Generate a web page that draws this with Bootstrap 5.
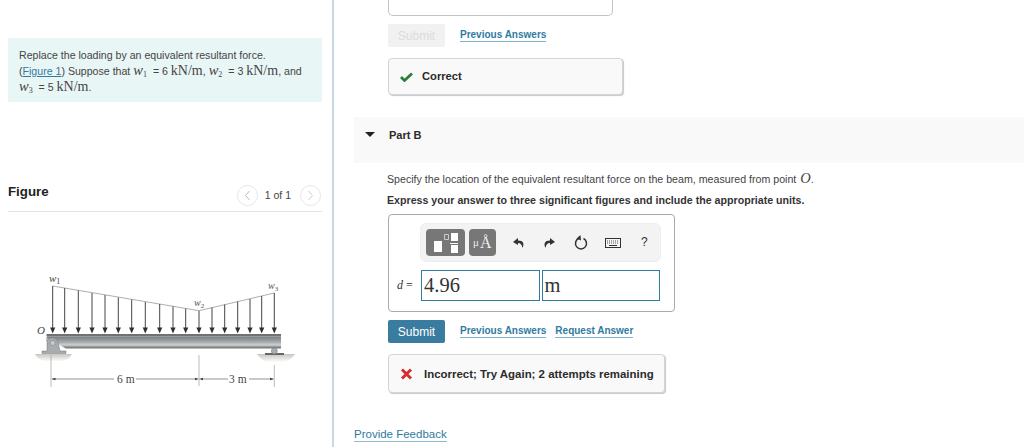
<!DOCTYPE html>
<html lang="en">
<head>
<meta charset="utf-8">
<title>Part B</title>
<link href="https://cdn.jsdelivr.net/npm/bootstrap@5.3.0/dist/css/bootstrap.min.css" rel="stylesheet">
<style>
html,body{height:447px;overflow:hidden;background:#fff}
body{font-family:"Liberation Sans",Arial,sans-serif;font-size:11px;color:#333;line-height:15px}
.shell{height:447px}
.leftpane{width:334px;flex:none;height:447px;border-right:2px solid #c6d7e6;padding:38px 10px 0 8px;overflow:hidden}
.intro{background:#e9f6f6;height:64px;padding:10px 11px;width:314px;font-size:10.6px;line-height:15px;color:#444;white-space:nowrap}
.intro a{color:#2f7ba1;text-decoration:underline}
.mth{font-family:"Liberation Serif",serif;font-size:14px}
.mi{font-family:"Liberation Serif",serif;font-style:italic;font-size:14.5px}
.mi sub{font-size:8px;font-style:normal;bottom:-.2em;margin-right:3px;line-height:0}
.nosub{margin-left:1px}
.fighead{margin-top:80px;width:314px;height:30px;border-bottom:1px solid #dfe3e6}
.figtitle{font-size:13.3px;font-weight:700;color:#222;padding-top:2px}
.pager{font-size:10.5px;color:#444;gap:7px;padding-top:3px;margin-right:1px}
.pgbtn{width:21px;height:21px;border-radius:50%;border:1px solid #e6e6e6;color:#bbb;display:flex;align-items:center;justify-content:center}
.pgtext{padding-top:3px;margin-right:2px}
.figbox{margin-top:53px;margin-left:-8px;display:block}
.rightpane{flex:1;min-width:0;margin-left:20px}
.inner{padding-left:34px;width:320px}
.prevbox{height:16px;width:225px;border:1px solid #c4c4c4;border-top:0;border-radius:0 0 5px 5px}
.sbm{width:57px;height:23px;border-radius:2px;font-size:12px;line-height:24px;text-align:center}
.sbm-off{background:#f1f1f1;color:#dcdcdc}
.sbm-on{background:#397ca0;color:#fff}
.actrow{gap:9px;align-items:flex-start}
.lnk{font-size:10px;font-weight:700;color:#2f7ba1;text-decoration:none;border-bottom:1px solid #7fb3cc;line-height:12px;margin-top:5px;margin-left:6px}
.lnk+.lnk{margin-left:0}
.fdbk{background:#f9f9f9;border:1px solid #d4d4d4;border-radius:4px;box-shadow:1px 1px 1px #c8c8c8;display:flex;align-items:center;font-weight:700;font-size:11.45px;color:#2b2b2b}
.fd1{width:235px;height:37px;margin-top:11px;padding-left:11px;gap:9px;font-size:11.2px}
.fd2{width:277px;height:39px;margin-top:11px;padding:1px 0 0 11px;gap:11px}
.partbar{background:#f9f9f9;height:46px;margin-top:22px;padding:11px 0 0 11px;gap:14px;font-weight:700;font-size:11px;color:#2b2b2b}
.tri{width:0;height:0;border-left:5px solid transparent;border-right:5px solid transparent;border-top:5px solid #222}
.ques{padding:8px 0 0 33px;height:51px;font-size:10.65px;color:#444}
.ques p{margin:0 0 6px}
.ques b{color:#333}
.ansbox{margin-left:34px;width:287px;height:98px;border:1px solid #aaa;border-radius:4px;padding:8px 0 0 8px}
.tbar{margin-left:23px;width:241px;height:39px;background:#f3f3f3;border-radius:6px;border:1px solid #eee;align-items:center;padding-left:5px}
.tmpl{height:27px;background:#777;border-radius:4px;display:flex;align-items:center;justify-content:center}
.t1{width:40px}
.t2{width:27px;margin-left:4px;color:#eee;font-family:"Liberation Serif",serif;font-size:11px;gap:1px}
.t2 span{font-size:16px}
.ticons{margin-left:7px;color:#333}
.ticons>span{width:31.5px;display:flex;justify-content:center;font-size:12px}
.ansrow{margin-top:8px;align-items:center}
.dlab{width:24px;font-family:"Liberation Serif",serif;font-size:12px;color:#333}
.fld{height:31px;width:118.5px;border:1px solid #2f7ba1;background:#fff;font-family:"Liberation Serif",serif;font-size:20.5px;line-height:29px;padding-left:2px;color:#333}
.fld+.fld{margin-left:2px}
.feedlink{display:inline-block;color:#2f7ba1;font-size:11.5px;margin-top:35px;text-decoration:none;border-bottom:1px solid #8dbbd3;line-height:13px}
.sbmrow{margin-top:8px}
.stems path{stroke:#444;stroke-width:1;fill:none}
.heads{fill:#2f2f2f}
</style>
</head>
<body>
<div class="d-flex shell">
  <div class="leftpane">
    <div class="intro">Replace the loading by an equivalent resultant force.<br>(<a href="#">Figure 1</a>) Suppose that <span class="mi">w<sub>1</sub></span> = 6 <span class="mth">kN/m</span>, <span class="mi">w<sub>2</sub></span> = 3 <span class="mth">kN/m</span>, and<br><span class="mi">w<sub>3</sub></span> = 5 <span class="mth">kN/m</span>.</div>
    <div class="fighead d-flex justify-content-between">
      <div class="figtitle">Figure</div>
      <div class="pager d-flex align-items-start"><span class="pgbtn"><svg width="7" height="11" viewBox="0 0 7 11"><path d="M5.500 1 1.500 5.500 5.500 10" fill="none" stroke="#bbb"/></svg></span><span class="pgtext">1 of 1</span><span class="pgbtn"><svg width="7" height="11" viewBox="0 0 7 11"><path d="M1.500 1 5.500 5.500 1.500 10" fill="none" stroke="#ccc"/></svg></span></div>
    </div>
    <svg class="figbox" width="320" height="125" viewBox="0 262 320 125" role="img" aria-label="Beam with distributed load">
      <defs>
        <linearGradient id="bm" x1="0" y1="0" x2="0" y2="1"><stop offset="0" stop-color="#7f8486"/><stop offset=".14" stop-color="#a9adae"/><stop offset=".22" stop-color="#7d8386"/><stop offset=".55" stop-color="#a5a9ab"/><stop offset=".76" stop-color="#cfd2d2"/><stop offset=".92" stop-color="#7d8285"/><stop offset="1" stop-color="#777"/></linearGradient>
        <linearGradient id="gr" x1="0" y1="0" x2="0" y2="1"><stop offset="0" stop-color="#c5c7bf"/><stop offset="1" stop-color="#fff"/></linearGradient>
        <path id="hd" d="M-2.600 324.500H2.600L0 330.500Z"/>
      </defs>
      <path d="M52.700 283 199 307.700 274.300 290" fill="none" stroke="#999" stroke-width=".8"/>
      <g class="stems">
        <path d="M52.700 283V326M64.700 285V326M78.300 287.500V326M92 290V326M105 292V326M118.300 294.500V326M131.700 296.500V326M145.300 299V326M159.700 301V326M173 303.500V326M185.700 305.500V326M199 308V326M212 304.500V326M224.700 301.500V326M237.700 298.500V326M250 296V326M261.700 293V326M274.300 290V326"/>
      </g>
      <g class="heads">
        <use href="#hd" x="52.700"/><use href="#hd" x="64.700"/><use href="#hd" x="78.300"/><use href="#hd" x="92"/><use href="#hd" x="105"/><use href="#hd" x="118.300"/><use href="#hd" x="131.700"/><use href="#hd" x="145.300"/><use href="#hd" x="159.700"/><use href="#hd" x="173"/><use href="#hd" x="185.700"/><use href="#hd" x="199"/><use href="#hd" x="212"/><use href="#hd" x="224.700"/><use href="#hd" x="237.700"/><use href="#hd" x="250"/><use href="#hd" x="261.700"/><use href="#hd" x="274.300"/>
      </g>
      <path d="M46.700 331H281V345.500H66L46.700 335Z" fill="url(#bm)"/>
      <path d="M46.700 331H281V333H46.700Z" fill="#6d7275"/>
      <path d="M35 351H72C68 358 62 359 53 358.500 44 359 38 357 35 351Z" fill="url(#gr)"/>
      <path d="M257 351H295C291 358 284 360 275 359 266 360 261 357 257 351Z" fill="url(#gr)"/>
      <path d="M47 335V348H42V350.500H66V348H60L58 339C56 334 50 333 47 338Z" fill="#a8acae" stroke="#777" stroke-width=".5"/>
      <circle cx="52.700" cy="340" r="2.500" fill="#c9cccc" stroke="#777" stroke-width=".5"/>
      <path d="M265 350H284V352H265Z" fill="#666"/>
      <circle cx="274.300" cy="348" r="3" fill="#a9adad" stroke="#777" stroke-width=".5"/>
      <path d="M51 352V384M199 352V383M274.300 362V384" stroke="#aaa" stroke-width=".8" fill="none"/>
      <path d="M52 376H114M136 376H197M201 376H228M249 376H273" stroke="#666" stroke-width=".7" fill="none"/>
      <path d="M51.500 376l4-1.300v2.600ZM199 376l-4-1.300v2.600ZM199 376l4-1.300v2.600ZM274 376l-4-1.300v2.600Z" fill="#444"/>
      <g font-family="Liberation Serif,serif" fill="#444">
        <text x="117" y="379.500" font-size="11.500">6 m</text>
        <text x="229" y="379.500" font-size="11.500">3 m</text>
        <text x="49" y="279" font-size="11" font-style="italic">w<tspan font-size="8" dy="2" font-style="normal">1</tspan></text>
        <text x="194" y="303" font-size="10" font-style="italic" fill="#555">w<tspan font-size="7" dy="2" font-style="normal">2</tspan></text>
        <text x="268" y="286" font-size="10" font-style="italic" fill="#555">w<tspan font-size="7" dy="2" font-style="normal">3</tspan></text>
        <text x="37" y="331" font-size="11" font-style="italic">O</text>
      </g>
    </svg>
  </div>
  <div class="rightpane">
    <div class="inner">
      <div class="prevbox"></div>
      <div class="d-flex actrow mt-2"><div class="sbm sbm-off">Submit</div><a class="lnk" href="#">Previous Answers</a></div>
      <div class="fdbk fd1"><svg width="13" height="10" viewBox="0 0 13 10"><path d="M1 5 4.500 8.500 12 1.500" fill="none" stroke="#2e7d3f" stroke-width="2.800"/></svg><span>Correct</span></div>
    </div>
    <div class="partbar d-flex align-items-start"><span class="tri mt-1"></span><span>Part B</span></div>
    <div class="ques">
      <p>Specify the location of the equivalent resultant force on the beam, measured from point <span class="mi nosub">O</span>.</p>
      <b>Express your answer to three significant figures and include the appropriate units.</b>
    </div>
    <div class="ansbox">
      <div class="tbar d-flex">
        <div class="tmpl t1"><svg width="24" height="20" viewBox="0 0 24 20"><path d="M0 8H8V19H0ZM17 0H24V8H17ZM17 12H24V20H17Z" fill="#fff"/><path d="M16 10.500H25" stroke="#fff"/><path d="M10.500 1.500H14.500V6.500H10.500Z" fill="none" stroke="#ddd" stroke-width=".8"/></svg></div>
        <div class="tmpl t2">μ<span>Å</span></div>
        <div class="d-flex ticons align-items-center">
          <span><svg width="13" height="12" viewBox="0 0 13 12"><path d="M6 1 1 5 6 8V6C9 6 10 8 10.500 11 12.500 7 11.500 3.500 6 3.500Z" fill="#333"/></svg></span>
          <span><svg width="13" height="12" viewBox="0 0 13 12"><path d="M7 1 12 5 7 8V6C4 6 3 8 2.500 11 .5 7 1.500 3.500 7 3.500Z" fill="#333"/></svg></span>
          <span><svg width="14" height="15" viewBox="0 0 14 15"><path d="M4.500 3.500A5.500 5.500 0 1 0 9.500 3.500" fill="none" stroke="#333" stroke-width="1.500"/><path d="M6.500 0 2.500 3.500 7 5.500Z" fill="#333"/></svg></span>
          <span><svg width="16" height="10" viewBox="0 0 16 10"><rect x=".5" y=".5" width="15" height="9" fill="#f5f5f5" stroke="#333"/><path d="M2 3H14M2 5H14" stroke="#555" stroke-dasharray="1 1"/><path d="M4 7.500H12" stroke="#333"/></svg></span>
          <span>?</span>
        </div>
      </div>
      <div class="d-flex ansrow"><div class="dlab"><i>d</i> =</div><div class="fld">4.96</div><div class="fld">m</div></div>
    </div>
    <div class="inner">
      <div class="d-flex actrow sbmrow"><div class="sbm sbm-on">Submit</div><a class="lnk" href="#">Previous Answers</a><a class="lnk" href="#">Request Answer</a></div>
      <div class="fdbk fd2"><svg width="13" height="12" viewBox="0 0 13 12"><path d="M2 1.500 11 10.500M11 1.500 2 10.500" stroke="#d32f2f" stroke-width="3"/></svg><span>Incorrect; Try Again; 2 attempts remaining</span></div>
    </div>
    <a class="feedlink" href="#">Provide Feedback</a>
  </div>
</div>
</body>
</html>
